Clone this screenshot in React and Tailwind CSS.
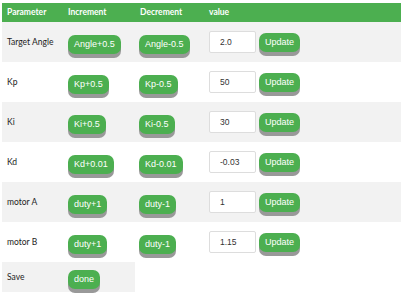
const rows = [
  { name: "Target Angle", inc: "Angle+0.5", dec: "Angle-0.5", value: "2.0" },
  { name: "Kp", inc: "Kp+0.5", dec: "Kp-0.5", value: "50" },
  { name: "Ki", inc: "Ki+0.5", dec: "Ki-0.5", value: "30" },
  { name: "Kd", inc: "Kd+0.01", dec: "Kd-0.01", value: "-0.03" },
  { name: "motor A", inc: "duty+1", dec: "duty-1", value: "1" },
  { name: "motor B", inc: "duty+1", dec: "duty-1", value: "1.15" },
];

function Btn({ children }) {
  return (
    <button
      type="button"
      className="h-[19px] rounded-[7px] bg-[#4caf50] px-[6px] text-[9px] leading-none text-white shadow-[0_4px_0_#999]"
      style={{ fontFamily: '"Liberation Sans", Arial, sans-serif' }}
    >
      {children}
    </button>
  );
}

export default function App() {
  const label = { fontFamily: "Lato, 'Open Sans', sans-serif" };

  return (
    <div className="h-[300px] w-[403px] bg-white pl-[2px] pt-[3px]">
      <div
        className="flex h-[19px] w-[399px] items-center bg-[#4caf50] text-[8.5px] font-bold text-white"
        style={label}
      >
        <div className="w-[61px] pl-[5px]">Parameter</div>
        <div className="w-[72px] pl-[5px]">Increment</div>
        <div className="w-[69px] pl-[5px]">Decrement</div>
        <div className="flex-1 pl-[5px]">value</div>
      </div>

      {rows.map((row, i) => (
        <div
          key={row.name}
          className={`flex h-[40px] w-[399px] items-center ${
            i % 2 === 0 ? "bg-[#f2f2f2]" : "bg-white"
          }`}
        >
          <div className="w-[61px] pl-[5px] text-[8.5px] text-[#222]" style={label}>
            {row.name}
          </div>
          <div className="w-[72px] pl-[5px] pb-[2px]">
            <Btn>{row.inc}</Btn>
          </div>
          <div className="w-[69px] pl-[4px] pb-[2px]">
            <Btn>{row.dec}</Btn>
          </div>
          <div className="flex flex-1 items-center gap-[3px] pl-[5px]">
            <input
              readOnly
              value={row.value}
              className="h-[22px] w-[47px] rounded-[2px] border border-[#ddd] bg-white pl-[10px] text-[8.5px] text-[#333] outline-none"
              style={{ fontFamily: '"Liberation Sans", Arial, sans-serif' }}
            />
            <Btn>Update</Btn>
          </div>
        </div>
      ))}

      <div className="flex h-[30px] w-[133px] items-center bg-[#f2f2f2]">
        <div className="w-[61px] pl-[5px] text-[8.5px] text-[#222]" style={label}>
          Save
        </div>
        <div className="w-[72px] pl-[5px] pb-[2px]">
          <Btn>done</Btn>
        </div>
      </div>
    </div>
  );
}
